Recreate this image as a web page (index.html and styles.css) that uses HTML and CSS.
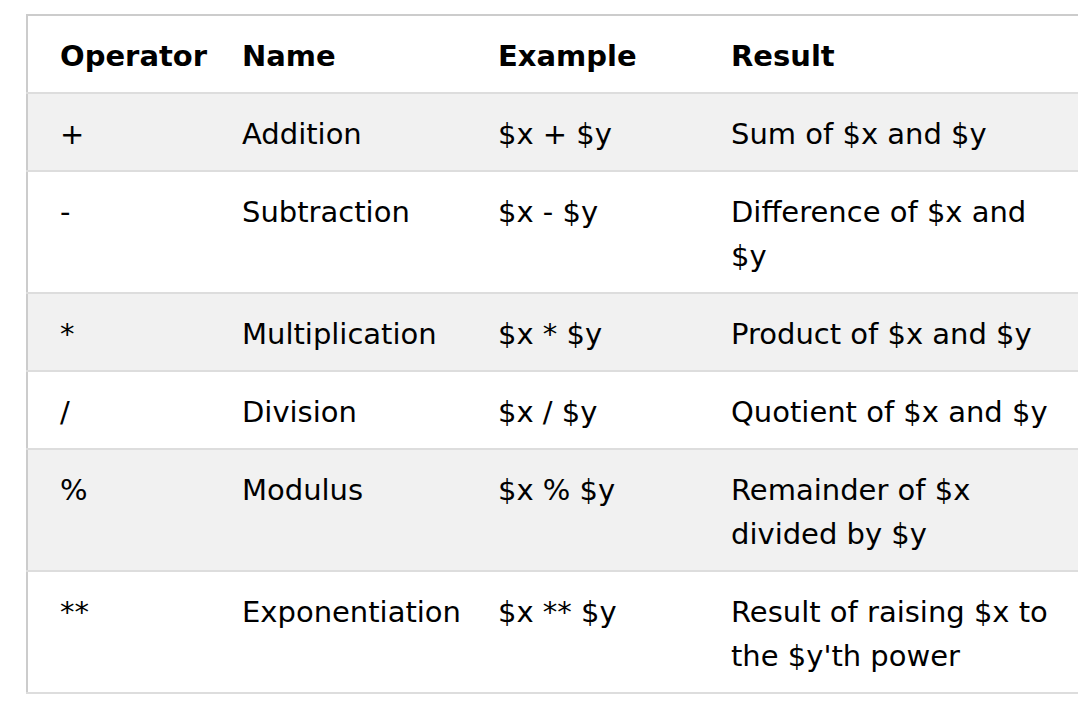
FILE: index.html
```html
<!DOCTYPE html>
<html>
<head>
<meta charset="utf-8">
<link rel="stylesheet" href="styles.css">
</head>
<body>
<div class="page">
<table class="ops">
  <colgroup>
    <col class="c1"><col class="c2"><col class="c3"><col class="c4">
  </colgroup>
  <tr><th>Operator</th><th>Name</th><th>Example</th><th>Result</th></tr>
  <tr><td>+</td><td>Addition</td><td>$x + $y</td><td>Sum of $x and $y</td></tr>
  <tr><td>-</td><td>Subtraction</td><td>$x - $y</td><td>Difference of $x and $y</td></tr>
  <tr><td>*</td><td>Multiplication</td><td>$x * $y</td><td>Product of $x and $y</td></tr>
  <tr><td>/</td><td>Division</td><td>$x / $y</td><td>Quotient of $x and $y</td></tr>
  <tr><td>%</td><td>Modulus</td><td>$x % $y</td><td>Remainder of $x divided by $y</td></tr>
  <tr><td>**</td><td>Exponentiation</td><td>$x ** $y</td><td>Result of raising $x to the $y'th power</td></tr>
</table>
</div>
</body>
</html>
```
FILE: styles.css
```css
html, body {
  margin: 0;
  padding: 0;
  background: #fff;
  overflow: hidden;
}
.page {
  padding: 14px 0 0 26px;
  width: 1200px;
}
.ops {
  border-collapse: collapse;
  border: 2px solid #ccc;
  table-layout: fixed;
  width: 1067px;
  font-family: "DejaVu Sans", Verdana, sans-serif;
  font-size: 29px;
  line-height: 44px;
  color: #000;
}
.c1 { width: 199px; }
.c2 { width: 256px; }
.c3 { width: 233px; }
.c4 { width: 377px; }
.ops tr {
  border-bottom: 2px solid #ddd;
}
.ops tr:nth-child(even) {
  background: #f1f1f1;
}
.ops th, .ops td {
  padding: 18px 16px 14px 16px;
  text-align: left;
  vertical-align: top;
}
.ops th {
  font-weight: bold;
}
.ops th:first-child, .ops td:first-child {
  padding-left: 32px;
}
.ops th:last-child, .ops td:last-child {
  padding-right: 36px;
}
```
